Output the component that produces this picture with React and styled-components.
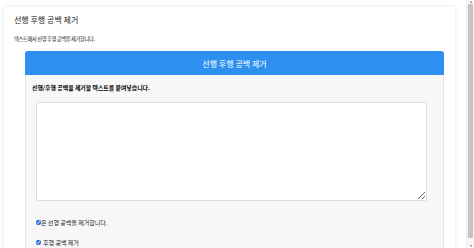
import React from "react";
import styled, { createGlobalStyle } from "styled-components";

const GlobalStyle = createGlobalStyle`
  html, body {
    margin: 0;
    padding: 0;
    background: #fff;
    font-family: "Noto Sans CJK KR", "Noto Sans", sans-serif;
    color: #222;
  }
`;

const Shell = styled.div`
  display: flex;
  height: 100vh;
  overflow: hidden;
`;

const Page = styled.div`
  flex: 1;
  min-width: 0;
  padding: 7px 11px 0 4px;
`;

const ScrollTrack = styled.div`
  width: 7px;
  flex-shrink: 0;
  background: #f7f7f7;
  border-left: 1px solid #ececec;
  display: flex;
  flex-direction: column;
  align-items: center;
  padding: 1px 0;
  gap: 1px;
`;

const Arrow = styled.div`
  width: 0;
  height: 0;
  border-left: 1.5px solid transparent;
  border-right: 1.5px solid transparent;
  ${(p) =>
    p.$down
      ? "border-top: 2px solid #777;"
      : "border-bottom: 2px solid #777;"}
`;

const Thumb = styled.div`
  flex: 1;
  width: 5px;
  margin-bottom: 6px;
  background: #c4c4c4;
  border-radius: 1px;
`;

const Card = styled.div`
  background: #fff;
  box-shadow: 0 0 4px rgba(0, 0, 0, 0.12);
  padding: 7px 11px 0 10px;
`;

const Title = styled.h1`
  margin: 0;
  font-size: 8px;
  line-height: 12px;
  font-weight: 400;
  color: #1a1a1a;
`;

const Desc = styled.p`
  margin: 8.5px 0 0;
  font-size: 5.2px;
  line-height: 8px;
  letter-spacing: -0.3px;
  color: #111;
`;

const Panel = styled.div`
  margin: 8.5px 0 0 11px;
  border: 1px solid #e4e4e4;
  border-top: none;
  border-radius: 3px 3px 0 0;
  background: #f7f7f7;
`;

const PanelHeader = styled.div`
  height: 24px;
  margin: 0 -1px;
  background: #2d90f1;
  border-radius: 3px 3px 0 0;
  color: #fff;
  font-size: 8px;
  display: flex;
  align-items: center;
  justify-content: center;
`;

const PanelBody = styled.div`
  padding: 9px 0 10px 10px;
`;

const Label = styled.div`
  font-size: 5.9px;
  line-height: 8px;
  font-weight: 700;
  color: #000;
  margin-left: -4px;
`;

const TextArea = styled.textarea`
  display: block;
  box-sizing: border-box;
  margin-top: 10px;
  width: 391px;
  height: 99px;
  border: 1px solid #ddd;
  border-radius: 2px;
  background: #fff;
  resize: vertical;
  outline: none;
`;

const CheckRow = styled.label`
  display: flex;
  align-items: center;
  margin-top: ${(p) => p.$gap}px;
  font-size: 6px;
  line-height: 8px;
  color: #222;
`;

const Check = styled.input`
  width: 5px;
  height: 5px;
  margin: 0 ${(p) => p.$space}px 0 0;
  accent-color: #2a6fd6;
`;

export default function App() {
  return (
    <>
      <GlobalStyle />
      <Shell>
        <Page>
          <Card>
            <Title>선행 후행 공백 제거</Title>
            <Desc>텍스트에서 선행 후행 공백을 제거합니다.</Desc>
            <Panel>
              <PanelHeader>선행 후행 공백 제거</PanelHeader>
              <PanelBody>
                <Label>선행/후행 공백을 제거할 텍스트를 붙여넣습니다.</Label>
                <TextArea />
                <CheckRow $gap={17.5}>
                  <Check type="checkbox" defaultChecked $space={0} />
                  은 선행 공백을 제거합니다.
                </CheckRow>
                <CheckRow $gap={12}>
                  <Check type="checkbox" defaultChecked $space={2} />
                  후행 공백 제거
                </CheckRow>
              </PanelBody>
            </Panel>
          </Card>
        </Page>
        <ScrollTrack>
          <Arrow />
          <Thumb />
          <Arrow $down />
        </ScrollTrack>
      </Shell>
    </>
  );
}
